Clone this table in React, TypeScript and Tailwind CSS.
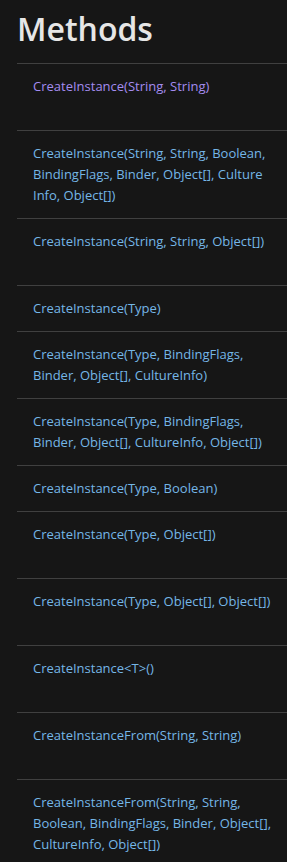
const methods: { lines: string[]; rows: 1 | 2 | 3; visited?: boolean }[] = [
  { lines: ['CreateInstance(String, String)'], rows: 2, visited: true },
  {
    lines: ['CreateInstance(String, String, Boolean,', 'BindingFlags, Binder, Object[], Culture', 'Info, Object[])'],
    rows: 3,
  },
  { lines: ['CreateInstance(String, String, Object[])'], rows: 2 },
  { lines: ['CreateInstance(Type)'], rows: 1 },
  { lines: ['CreateInstance(Type, BindingFlags,', 'Binder, Object[], CultureInfo)'], rows: 2 },
  { lines: ['CreateInstance(Type, BindingFlags,', 'Binder, Object[], CultureInfo, Object[])'], rows: 2 },
  { lines: ['CreateInstance(Type, Boolean)'], rows: 1 },
  { lines: ['CreateInstance(Type, Object[])'], rows: 2 },
  { lines: ['CreateInstance(Type, Object[], Object[])'], rows: 2 },
  { lines: ['CreateInstance<T>()'], rows: 2 },
  { lines: ['CreateInstanceFrom(String, String)'], rows: 2 },
  {
    lines: ['CreateInstanceFrom(String, String,', 'Boolean, BindingFlags, Binder, Object[],', 'CultureInfo, Object[])'],
    rows: 3,
  },
];

const rowHeight = {
  1: 'h-[21px]',
  2: 'h-[42px]',
  3: 'h-[63px]',
};

export default function App() {
  return (
    <div
      className="min-h-screen w-[287px] overflow-hidden bg-[#161616] pl-[17px]"
      style={{ fontFamily: '"Open Sans", "Noto Sans", sans-serif' }}>
      <h2 className="h-[63px] pt-[8px] text-[32px] leading-[42px] font-semibold text-[#e6e6e6]">
        Methods
      </h2>

      <ul>
        {methods.map((m, i) => (
          <li key={i} className="border-t border-[#404040] py-3 pl-4">
            <div className={`${rowHeight[m.rows]} text-[13px] leading-[21px]`}>
              {m.lines.map((line, j) => (
                <div
                  key={j}
                  className={`whitespace-nowrap ${m.visited ? 'text-[#a48cf0]' : 'text-[#75b6e7]'}`}>
                  {line}
                </div>
              ))}
            </div>
          </li>
        ))}
      </ul>
    </div>
  );
}
